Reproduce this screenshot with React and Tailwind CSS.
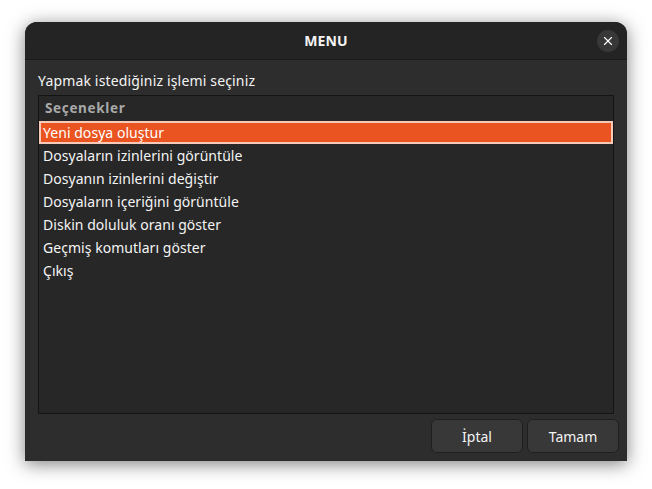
import { X } from 'lucide-react'

const secenekler = [
  'Yeni dosya oluştur',
  'Dosyaların izinlerini görüntüle',
  'Dosyanın izinlerini değiştir',
  'Dosyaların içeriğini görüntüle',
  'Diskin doluluk oranı göster',
  'Geçmiş komutları göster',
  'Çıkış',
]

export default function App() {
  return (
    <div className="w-[652px] h-[489px] bg-white pt-[22px] pl-[25px] overflow-hidden font-['Noto_Sans',sans-serif]">
      <div className="w-[602px] h-[439px] flex flex-col bg-[#2d2d2d] rounded-t-[12px] shadow-[0_3px_18px_rgba(0,0,0,0.5)] text-[#f4f4f4]">
        <div className="h-[38px] shrink-0 flex items-center justify-center relative bg-[#242424] border-b border-[#1a1a1a] rounded-t-[12px]">
          <span className="text-[14px] font-bold tracking-[0.1px]">MENU</span>
          <button className="absolute right-[8px] top-[8px] w-[22px] h-[22px] rounded-full bg-[#383838] flex items-center justify-center">
            <X size={14} strokeWidth={2} color="#ffffff" />
          </button>
        </div>

        <div className="flex-1 flex flex-col pl-[13px] pr-[8px] pb-[8px]">
          <div className="h-[35px] shrink-0 flex items-center pt-[6px] text-[14px] leading-none tracking-[0.16px]">
            Yapmak istediğiniz işlemi seçiniz
          </div>
          <div className="w-[576px] h-[319px] bg-[#272727] border border-[#141414]">
            <div className="h-[25px] pl-[6px] pb-[1px] flex items-center text-[13.5px] font-bold text-[#a9a9a9] tracking-[0.65px]">
              Seçenekler
            </div>
            <ul className="tracking-[0.04px]">
              {secenekler.map((s, i) => (
                <li
                  key={s}
                  className={
                    i === 0
                      ? 'h-[23px] pl-[2px] flex items-center text-[14px] bg-[#e95420] border-2 border-[#f6c9b8] text-white'
                      : 'h-[23px] pl-[4px] flex items-center text-[14px]'
                  }
                >
                  {s}
                </li>
              ))}
            </ul>
          </div>
          <div className="flex justify-end gap-[4px] mt-[5px]">
            <button className="w-[92px] h-[34px] rounded-[6px] bg-[#383838] border border-[#1f1f1f] text-[14px]">İptal</button>
            <button className="w-[92px] h-[34px] rounded-[6px] bg-[#383838] border border-[#1f1f1f] text-[14px]">Tamam</button>
          </div>
        </div>
      </div>
    </div>
  )
}
